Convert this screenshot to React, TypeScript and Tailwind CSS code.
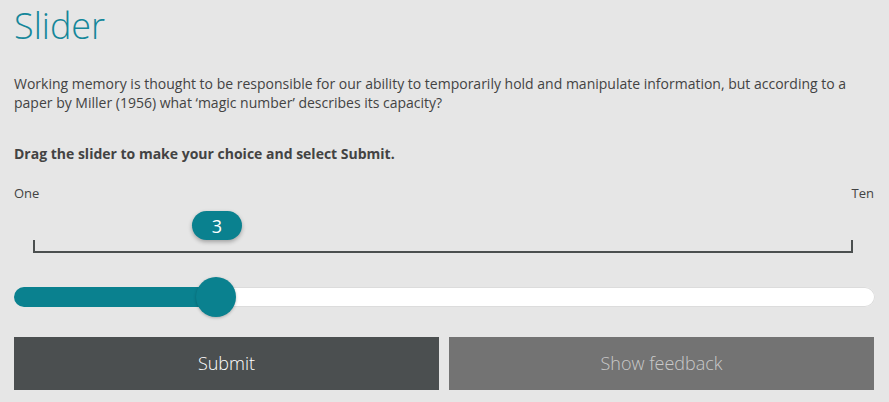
import React from "react";

const value = 3;

export default function App() {
  return (
    <div
      className="min-h-[402px] w-full bg-[#e6e6e6] px-[14px] text-[#434343]"
      style={{ fontFamily: '"Open Sans", sans-serif' }}
    >
      <h1 className="pt-[4px] text-[36px] font-light leading-[44px] text-[#14879a]">Slider</h1>

      <p className="mt-[26px] text-[14px] leading-[19px]">
        Working memory is thought to be responsible for our ability to temporarily hold and manipulate
        information, but according to a paper by Miller (1956) what ‘magic number’ describes its capacity?
      </p>

      <p className="mt-[32px] text-[14px] font-bold leading-[19px]">
        Drag the slider to make your choice and select Submit.
      </p>

      <div className="mt-[21px] flex justify-between text-[13px] leading-[18px]">
        <span>One</span>
        <span className="mr-[1px]">Ten</span>
      </div>

      {/* scale bracket with value bubble */}
      <div className="ml-[19px] mr-[22px] mt-[9px]">
        <div className="relative h-[29px]">
          <div className="absolute left-[159px] top-0 flex h-[29px] w-[50px] items-center justify-center rounded-full bg-[#0a818f] text-[18px] leading-none text-white shadow-[0_2px_4px_rgba(0,0,0,0.3)]">
            {value}
          </div>
        </div>
        <div className="h-[13px] border-x-2 border-b-2 border-[#4b4f4f]" />
      </div>

      {/* slider track */}
      <div className="relative mt-[34px] h-[20px] rounded-full bg-white shadow-[inset_0_0_0_1px_#dcdcdc]">
        <div className="absolute left-0 top-0 h-full w-[202px] rounded-l-full bg-[#0a818f]" />
        <div className="absolute left-[182px] top-[-10px] h-[40px] w-[40px] rounded-full bg-[#0a818f] shadow-[0_1px_3px_rgba(0,0,0,0.25)]" />
      </div>

      <div className="mt-[30px] flex gap-[10px] pr-[1px]">
        <button className="h-[53px] flex-1 bg-[#4b4f50] text-[18px] font-light text-white">Submit</button>
        <button className="h-[53px] flex-1 bg-[#737373] text-[18px] font-light text-[#c9c9c9]">Show feedback</button>
      </div>
    </div>
  );
}
